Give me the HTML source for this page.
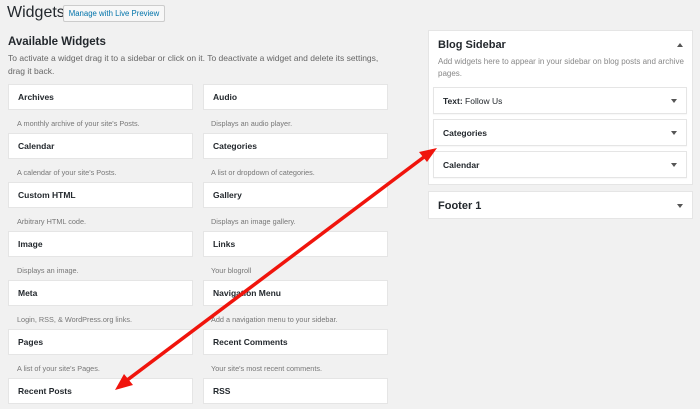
<!DOCTYPE html>
<html><head><meta charset="utf-8"><style>
*{margin:0;padding:0;box-sizing:border-box}
body{width:700px;height:409px;background:#f1f1f1;font-family:"Liberation Sans",sans-serif;position:relative;overflow:hidden;color:#23282d}
.a{position:absolute}
h1{position:absolute;left:7px;top:4px;font-size:16px;font-weight:400;color:#23282d}
.btn{position:absolute;left:63px;top:5px;width:102px;height:17px;border:1px solid #ccc;background:#f7f7f7;font-size:7.8px;color:#0073aa;text-align:center;line-height:15px;border-radius:2px;white-space:nowrap}
.h2{position:absolute;left:8px;top:36px;font-size:11.5px;font-weight:700}
.p{position:absolute;left:8px;top:52px;width:380px;font-size:8.5px;line-height:12.5px;color:#666}
.w{position:absolute;width:185px;height:26px;background:#fff;border:1px solid #e5e5e5;font-size:8.5px;font-weight:700;padding-left:9px;line-height:25px}
.d{position:absolute;font-size:7.3px;color:#777}
.panel{position:absolute;left:428px;background:#fff;border:1px solid #e5e5e5}
.iw{position:absolute;left:433px;width:254px;height:27px;background:#fff;border:1px solid #e5e5e5;font-size:8.5px;font-weight:700;padding-left:9px;line-height:26px;box-shadow:0 1px 1px rgba(0,0,0,.04)}
.tri{position:absolute;right:9px;top:11px;width:0;height:0;border-left:3px solid transparent;border-right:3px solid transparent;border-top:4px solid #555}
.up{border-top:none;border-bottom:4px solid #555}
</style></head><body>
<h1>Widgets</h1>
<div class="btn">Manage with Live Preview</div>
<div class="h2">Available Widgets</div>
<div class="p">To activate a widget drag it to a sidebar or click on it. To deactivate a widget and delete its settings, drag it back.</div>

<div class="w" style="left:8px;top:84px">Archives</div><div class="d" style="left:17px;top:119px">A monthly archive of your site's Posts.</div>
<div class="w" style="left:203px;top:84px">Audio</div><div class="d" style="left:211px;top:119px">Displays an audio player.</div>
<div class="w" style="left:8px;top:133px">Calendar</div><div class="d" style="left:17px;top:168px">A calendar of your site's Posts.</div>
<div class="w" style="left:203px;top:133px">Categories</div><div class="d" style="left:211px;top:168px">A list or dropdown of categories.</div>
<div class="w" style="left:8px;top:182px">Custom HTML</div><div class="d" style="left:17px;top:217px">Arbitrary HTML code.</div>
<div class="w" style="left:203px;top:182px">Gallery</div><div class="d" style="left:211px;top:217px">Displays an image gallery.</div>
<div class="w" style="left:8px;top:231px">Image</div><div class="d" style="left:17px;top:266px">Displays an image.</div>
<div class="w" style="left:203px;top:231px">Links</div><div class="d" style="left:211px;top:266px">Your blogroll</div>
<div class="w" style="left:8px;top:280px">Meta</div><div class="d" style="left:17px;top:315px">Login, RSS, &amp; WordPress.org links.</div>
<div class="w" style="left:203px;top:280px">Navigation Menu</div><div class="d" style="left:211px;top:315px">Add a navigation menu to your sidebar.</div>
<div class="w" style="left:8px;top:329px">Pages</div><div class="d" style="left:17px;top:364px">A list of your site's Pages.</div>
<div class="w" style="left:203px;top:329px">Recent Comments</div><div class="d" style="left:211px;top:364px">Your site's most recent comments.</div>
<div class="w" style="left:8px;top:378px">Recent Posts</div>
<div class="w" style="left:203px;top:378px">RSS</div>

<div class="panel" style="top:30px;width:265px;height:155px">
<div class="a" style="left:9px;top:8px;font-size:11px;font-weight:700">Blog Sidebar</div>
<div class="tri up" style="top:12px"></div>
<div class="a" style="left:9px;top:25px;width:250px;font-size:8px;line-height:12px;color:#888">Add widgets here to appear in your sidebar on blog posts and archive pages.</div>
</div>
<div class="iw" style="top:87px">Text: <span style="font-weight:400">Follow Us</span><div class="tri"></div></div>
<div class="iw" style="top:119px">Categories<div class="tri"></div></div>
<div class="iw" style="top:151px">Calendar<div class="tri"></div></div>
<div class="panel" style="top:191px;width:265px;height:28px">
<div class="a" style="left:9px;top:8px;font-size:11px;font-weight:700">Footer 1</div>
<div class="tri" style="top:12px"></div>
</div>

<svg class="a" style="left:0;top:0" width="700" height="409">
<line x1="428" y1="154" x2="122" y2="384" stroke="#f0140c" stroke-width="3.5"/>
<polygon points="437,148 419,152 427,162" fill="#f0140c"/>
<polygon points="115,390 124,374 133,385" fill="#f0140c"/>
</svg>
</body></html>
